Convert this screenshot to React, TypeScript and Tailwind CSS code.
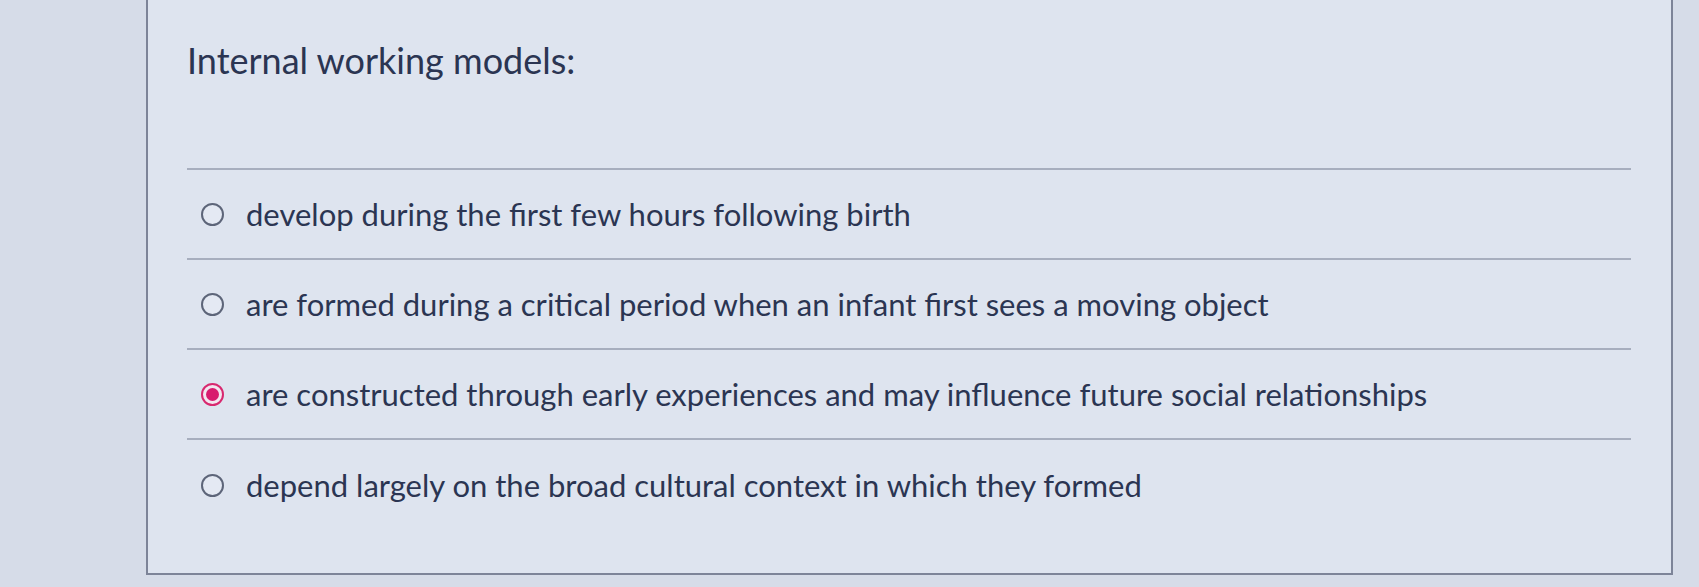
import React from "react";

const options = [
  { text: "develop during the first few hours following birth", checked: false },
  { text: "are formed during a critical period when an infant first sees a moving object", checked: false },
  { text: "are constructed through early experiences and may influence future social relationships", checked: true },
  { text: "depend largely on the broad cultural context in which they formed", checked: false },
];

function Radio({ checked }: { checked: boolean }) {
  if (checked) {
    return (
      <span className="flex h-[23px] w-[23px] shrink-0 items-center justify-center rounded-full border-[2px] border-[#d8286f] bg-[#f3e6ef]">
        <span className="h-[13px] w-[13px] rounded-full bg-[#d81b6e]" />
      </span>
    );
  }
  return <span className="h-[23px] w-[23px] shrink-0 rounded-full border-[2px] border-[#5d6579] bg-[#e4e9f3]" />;
}

export default function App() {
  return (
    <div
      className="h-[587px] w-[1699px] overflow-hidden bg-[#d6dce8]"
      style={{ fontFamily: "Lato, 'Open Sans', sans-serif" }}
    >
      <div className="ml-[146px] h-[575px] w-[1527px] border-x-[2px] border-b-[2px] border-[#7d8498] bg-[#dee4ef] pl-[39px] pr-[40px]">
        <div className="flex h-[168px] items-start pt-[38px]">
          <h1 className="text-[36px] leading-[44px] text-[#2b3552]">Internal working models:</h1>
        </div>
        <div className="flex flex-col">
          {options.map((o, i) => (
            <div
              key={i}
              className="flex h-[90px] items-center gap-[22px] border-t-[2px] border-[#a7aebe] pl-[14px]"
              style={i === 3 ? { height: "92px" } : undefined}
            >
              <Radio checked={o.checked} />
              <span className="text-[31px] leading-[38px] text-[#2b3552]">{o.text}</span>
            </div>
          ))}
        </div>
      </div>
    </div>
  );
}
